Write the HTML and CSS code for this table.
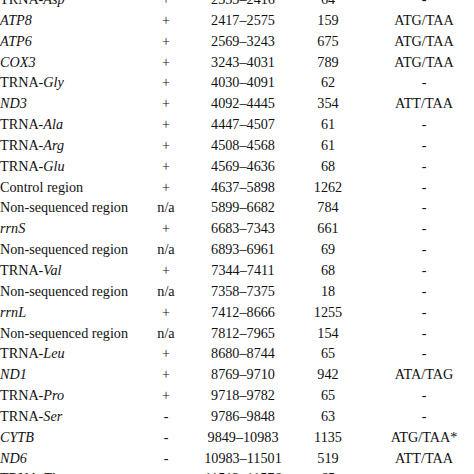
FILE: index.html
```html
<!DOCTYPE html>
<html>
<head>
<meta charset="utf-8">
<link rel="stylesheet" href="styles.css">
</head>
<body>
<div class="table">
  <div class="row"><span class="name">TRNA-<i>Asp</i></span><span class="c">+</span><span class="c">2353–2416</span><span class="c">64</span><span class="c">-</span></div>
  <div class="row"><span class="name"><i>ATP8</i></span><span class="c">+</span><span class="c">2417–2575</span><span class="c">159</span><span class="c">ATG/TAA</span></div>
  <div class="row"><span class="name"><i>ATP6</i></span><span class="c">+</span><span class="c">2569–3243</span><span class="c">675</span><span class="c">ATG/TAA</span></div>
  <div class="row"><span class="name"><i>COX3</i></span><span class="c">+</span><span class="c">3243–4031</span><span class="c">789</span><span class="c">ATG/TAA</span></div>
  <div class="row"><span class="name">TRNA-<i>Gly</i></span><span class="c">+</span><span class="c">4030–4091</span><span class="c">62</span><span class="c">-</span></div>
  <div class="row"><span class="name"><i>ND3</i></span><span class="c">+</span><span class="c">4092–4445</span><span class="c">354</span><span class="c">ATT/TAA</span></div>
  <div class="row"><span class="name">TRNA-<i>Ala</i></span><span class="c">+</span><span class="c">4447–4507</span><span class="c">61</span><span class="c">-</span></div>
  <div class="row"><span class="name">TRNA-<i>Arg</i></span><span class="c">+</span><span class="c">4508–4568</span><span class="c">61</span><span class="c">-</span></div>
  <div class="row"><span class="name">TRNA-<i>Glu</i></span><span class="c">+</span><span class="c">4569–4636</span><span class="c">68</span><span class="c">-</span></div>
  <div class="row"><span class="name">Control region</span><span class="c">+</span><span class="c">4637–5898</span><span class="c">1262</span><span class="c">-</span></div>
  <div class="row"><span class="name">Non-sequenced region</span><span class="c">n/a</span><span class="c">5899–6682</span><span class="c">784</span><span class="c">-</span></div>
  <div class="row"><span class="name"><i>rrnS</i></span><span class="c">+</span><span class="c">6683–7343</span><span class="c">661</span><span class="c">-</span></div>
  <div class="row"><span class="name">Non-sequenced region</span><span class="c">n/a</span><span class="c">6893–6961</span><span class="c">69</span><span class="c">-</span></div>
  <div class="row"><span class="name">TRNA-<i>Val</i></span><span class="c">+</span><span class="c">7344–7411</span><span class="c">68</span><span class="c">-</span></div>
  <div class="row"><span class="name">Non-sequenced region</span><span class="c">n/a</span><span class="c">7358–7375</span><span class="c">18</span><span class="c">-</span></div>
  <div class="row"><span class="name"><i>rrnL</i></span><span class="c">+</span><span class="c">7412–8666</span><span class="c">1255</span><span class="c">-</span></div>
  <div class="row"><span class="name">Non-sequenced region</span><span class="c">n/a</span><span class="c">7812–7965</span><span class="c">154</span><span class="c">-</span></div>
  <div class="row"><span class="name">TRNA-<i>Leu</i></span><span class="c">+</span><span class="c">8680–8744</span><span class="c">65</span><span class="c">-</span></div>
  <div class="row"><span class="name"><i>ND1</i></span><span class="c">+</span><span class="c">8769–9710</span><span class="c">942</span><span class="c">ATA/TAG</span></div>
  <div class="row"><span class="name">TRNA-<i>Pro</i></span><span class="c">+</span><span class="c">9718–9782</span><span class="c">65</span><span class="c">-</span></div>
  <div class="row"><span class="name">TRNA-<i>Ser</i></span><span class="c">-</span><span class="c">9786–9848</span><span class="c">63</span><span class="c">-</span></div>
  <div class="row"><span class="name"><i>CYTB</i></span><span class="c">-</span><span class="c">9849–10983</span><span class="c">1135</span><span class="c">ATG/TAA*</span></div>
  <div class="row"><span class="name"><i>ND6</i></span><span class="c">-</span><span class="c">10983–11501</span><span class="c">519</span><span class="c">ATT/TAA</span></div>
  <div class="row"><span class="name">TRNA-<i>Thr</i></span><span class="c">-</span><span class="c">11512–11576</span><span class="c">65</span><span class="c">-</span></div>
</div>
</body>
</html>
```

FILE: styles.css
```css
html, body {
  margin: 0;
  padding: 0;
  background: #ffffff;
  overflow: hidden;
}
.table {
  margin-top: -11px;
  font-family: "Liberation Serif", "Times New Roman", serif;
  font-size: 14.2px;
  color: #111111;
}
.row {
  display: grid;
  grid-template-columns: 136px 60px 94px 76px 116px;
  height: 20.85px;
  line-height: 20.85px;
  white-space: nowrap;
}
.name {
  text-align: left;
}
.c {
  text-align: center;
}
```
